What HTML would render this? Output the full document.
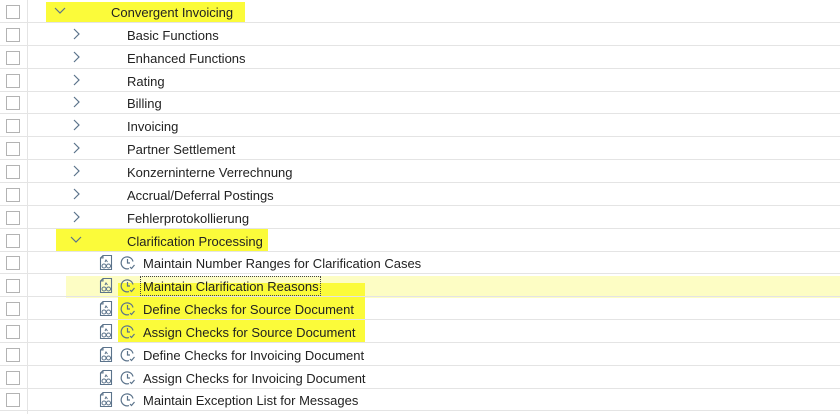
<!DOCTYPE html>
<html><head><meta charset="utf-8"><style>
body{margin:0;width:840px;height:414px;background:#fff;position:relative;overflow:hidden;font-family:"Liberation Sans",Arial,sans-serif;font-size:13px;color:#222}
.r{position:absolute;left:0;width:840px;height:23px;border-bottom:1px solid #e4e4e4;box-sizing:border-box}
.cb{position:absolute;left:6px;top:5px;width:12px;height:12px;border:1px solid #b3b3b3;background:#fff}
.vl{position:absolute;left:27px;top:0;width:1px;height:414px;background:#e4e4e4}
.t{position:absolute;top:5px;white-space:nowrap;line-height:15px}
.hl{position:absolute;background:#fbfb3a}
svg{position:absolute}
</style></head><body>
<div class="hl" style="left:46px;top:2px;width:199px;height:20px"></div>
<div class="hl" style="left:56px;top:229px;width:212px;height:23px"></div>
<div style="position:absolute;left:66px;top:276px;width:774px;height:22px;background:#fdfdc4"></div>
<div class="hl" style="left:118px;top:283px;width:247px;height:60px"></div>
<div class="vl"></div>
<div id="rows"></div>
<script>
var rows=[
[0,"Convergent Invoicing","d"],
[1,"Basic Functions","r"],[1,"Enhanced Functions","r"],[1,"Rating","r"],[1,"Billing","r"],[1,"Invoicing","r"],[1,"Partner Settlement","r"],[1,"Konzerninterne Verrechnung","r"],[1,"Accrual/Deferral Postings","r"],[1,"Fehlerprotokollierung","r"],
[1,"Clarification Processing","d"],
[2,"Maintain Number Ranges for Clarification Cases"],[2,"Maintain Clarification Reasons"],[2,"Define Checks for Source Document"],[2,"Assign Checks for Source Document"],[2,"Define Checks for Invoicing Document"],[2,"Assign Checks for Invoicing Document"],[2,"Maintain Exception List for Messages"]];
var h="";
rows.forEach(function(r,i){
 var top=Math.round(i*22.85);
 h+='<div class="r" style="top:'+top+'px"><div class="cb"></div>';
 if(r[0]<2){
  var cx=r[0]==0?60:76;
  if(r[2]=="d") h+='<svg style="left:'+(cx-6)+'px;top:7px" width="12" height="8"><path d="M1 1 L6 6 L11 1" fill="none" stroke="#5b738b" stroke-width="1.2"/></svg>';
  else h+='<svg style="left:'+(cx-3)+'px;top:5px" width="8" height="12"><path d="M1 1 L6 6 L1 11" fill="none" stroke="#5b738b" stroke-width="1.2"/></svg>';
  h+='<div class="t" style="left:'+(r[0]==0?111:127)+'px">'+r[1]+'</div>';
 } else {
  h+='<svg style="left:98px;top:3px" width="16" height="17"><path d="M5 1.5 H13.5 V15.5 H2.5 V4 Z M2.5 4 H5 V1.5" fill="none" stroke="#5b738b" stroke-width="1.1"/><circle cx="6" cy="12" r="2" fill="none" stroke="#5b738b"/><circle cx="10.5" cy="12" r="2" fill="none" stroke="#5b738b"/><path d="M7 8 L8 6 L9.5 8" fill="none" stroke="#5b738b"/></svg>';
  h+='<svg style="left:120px;top:4px" width="16" height="16"><path d="M13 6.5 A6 6 0 1 0 9 13.6" fill="none" stroke="#5b738b" stroke-width="1.2"/><path d="M7.5 4 V8 H10" fill="none" stroke="#5b738b" stroke-width="1.2"/><path d="M10 12 L11.5 13.5 L14.5 10" fill="none" stroke="#5b738b" stroke-width="1.2"/></svg>';
  h+='<div class="t" style="left:143px">'+r[1]+'</div>';
 }
 if(i==12) h+='<div style="position:absolute;left:140px;top:2px;width:179px;height:18px;border:1px dotted #444"></div>';
 h+='</div>';
});
document.getElementById("rows").innerHTML=h;
</script>
</body></html>
